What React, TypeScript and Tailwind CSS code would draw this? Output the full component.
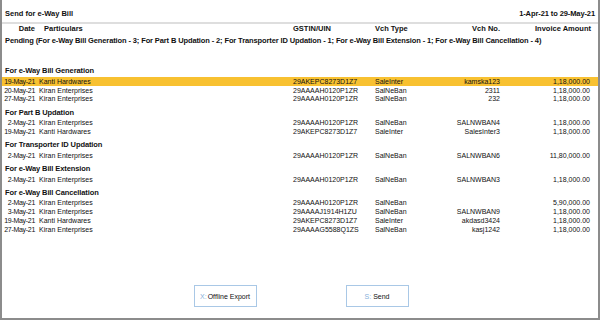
import React from "react";

type Row = { date: string; party: string; gstin: string; type: string; no: string; amt: string; hl?: boolean };
type Section = { title: string; rows: Row[] };

const sections: Section[] = [
  {
    title: "For e-Way Bill Generation",
    rows: [
      { date: "19-May-21", party: "Kanti Hardwares", gstin: "29AKEPC8273D1Z7", type: "SaleInter", no: "kamska123", amt: "1,18,000.00", hl: true },
      { date: "20-May-21", party: "Kiran Enterprises", gstin: "29AAAAH0120P1ZR", type: "SalNeBan", no: "2311", amt: "1,18,000.00" },
      { date: "27-May-21", party: "Kiran Enterprises", gstin: "29AAAAH0120P1ZR", type: "SalNeBan", no: "232", amt: "1,18,000.00" },
    ],
  },
  {
    title: "For Part B Updation",
    rows: [
      { date: "2-May-21", party: "Kiran Enterprises", gstin: "29AAAAH0120P1ZR", type: "SalNeBan", no: "SALNWBAN4", amt: "1,18,000.00" },
      { date: "19-May-21", party: "Kanti Hardwares", gstin: "29AKEPC8273D1Z7", type: "SaleInter", no: "SalesInter3", amt: "1,18,000.00" },
    ],
  },
  {
    title: "For Transporter ID Updation",
    rows: [
      { date: "2-May-21", party: "Kiran Enterprises", gstin: "29AAAAH0120P1ZR", type: "SalNeBan", no: "SALNWBAN6", amt: "11,80,000.00" },
    ],
  },
  {
    title: "For e-Way Bill Extension",
    rows: [
      { date: "2-May-21", party: "Kiran Enterprises", gstin: "29AAAAH0120P1ZR", type: "SalNeBan", no: "SALNWBAN3", amt: "1,18,000.00" },
    ],
  },
  {
    title: "For e-Way Bill Cancellation",
    rows: [
      { date: "2-May-21", party: "Kiran Enterprises", gstin: "29AAAAH0120P1ZR", type: "SalNeBan", no: "", amt: "5,90,000.00" },
      { date: "3-May-21", party: "Kiran Enterprises", gstin: "29AAAAJ1914H1ZU", type: "SalNeBan", no: "SALNWBAN9", amt: "1,18,000.00" },
      { date: "19-May-21", party: "Kanti Hardwares", gstin: "29AKEPC8273D1Z7", type: "SaleInter", no: "akdasd3424", amt: "1,18,000.00" },
      { date: "27-May-21", party: "Kiran Enterprises", gstin: "29AAAAG5588Q1ZS", type: "SalNeBan", no: "kasj1242", amt: "1,18,000.00" },
    ],
  },
];

const cols = "grid grid-cols-[33px_258px_82px_61px_64px_91px]";

export default function App() {
  return (
    <div
      className="w-[600px] h-[320px] bg-white flex flex-col border-l-2 border-r-2 border-b-2 border-[#8c8c8c] text-[#111] overflow-hidden"
      style={{ fontFamily: '"Liberation Sans", Arial, sans-serif' }}
    >
      <div className="flex-1 flex flex-col">
        {/* Title */}
        <div className="h-[22px] pt-[6px] flex items-center justify-between pl-[3px] pr-[3px] text-[7.5px] font-bold leading-none">
          <span>Send for e-Way Bill</span>
          <span className="tracking-[-0.1px]">1-Apr-21 to 29-May-21</span>
        </div>
        {/* Header */}
        <div className={`${cols} border-t-2 border-[#dedede] h-[11px] items-center text-[7.5px] font-bold leading-none`}>
          <span className="text-right">Date</span>
          <span className="pl-[9px]">Particulars</span>
          <span>GSTIN/UIN</span>
          <span>Vch Type</span>
          <span className="text-right">Vch No.</span>
          <span className="text-right">Invoice Amount</span>
        </div>
        {/* Pending */}
        <div className="h-[16px] flex items-center pl-[3px] text-[7.5px] font-bold leading-none whitespace-nowrap tracking-[-0.12px]">
          Pending (For e-Way Bill Generation - 3; For Part B Updation - 2; For Transporter ID Updation - 1; For e-Way Bill Extension - 1; For e-Way Bill Cancellation - 4)
        </div>
        <div className="h-[13px]" />
        {sections.map((s) => (
          <div key={s.title} className="flex flex-col">
            <div className="h-[12px] mt-[3px] flex items-center pl-[3px] text-[7.5px] font-bold leading-none tracking-[-0.1px]">
              {s.title}
            </div>
            {s.rows.map((r, i) => (
              <div
                key={i}
                className={`${cols} h-[8.8px] items-center text-[7px] leading-none whitespace-nowrap ${r.hl ? "bg-[#f8c131]" : ""}`}
              >
                <span className="text-right tracking-[-0.3px]">{r.date}</span>
                <span className="pl-[4px]">{r.party}</span>
                <span>{r.gstin}</span>
                <span>{r.type}</span>
                <span className="text-right">{r.no}</span>
                <span className="text-right pr-[1px]">{r.amt}</span>
              </div>
            ))}
          </div>
        ))}
      </div>
      <div className="h-[22px] mb-[11px] flex justify-center gap-[89px] pl-[2px]">
        <button className="w-[63px] h-[22px] border border-[#a9c8e6] bg-white flex items-center justify-center text-[7px] leading-none">
          <span className="text-[#86b0da]">X:</span>
          <span className="ml-[1px]">Offline Export</span>
        </button>
        <button className="w-[63px] h-[22px] border border-[#a9c8e6] bg-white flex items-center justify-center text-[7px] leading-none">
          <span className="text-[#86b0da]">S:</span>
          <span className="ml-[2px]">Send</span>
        </button>
      </div>
    </div>
  );
}
